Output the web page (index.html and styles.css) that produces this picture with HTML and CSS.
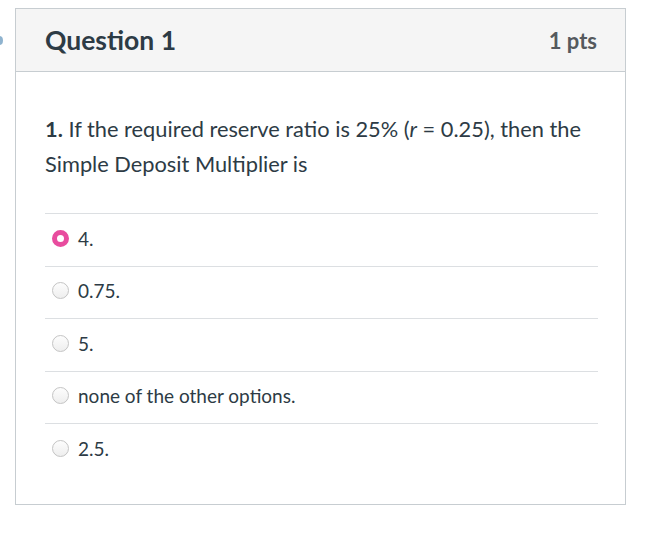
FILE: index.html
```html
<!DOCTYPE html>
<html>
<head>
<meta charset="utf-8">
<link rel="stylesheet" href="styles.css">
</head>
<body>
<div class="flag"></div>
<div class="card">
  <div class="header">
    <span class="title">Question 1</span>
    <span class="pts">1 pts</span>
  </div>
  <div class="body">
    <p class="qtext"><b>1.</b> If the required reserve ratio is 25% (<i>r</i> = 0.25), then the Simple Deposit Multiplier is</p>
    <div class="answers">
      <div class="answer"><span class="radio selected"></span><span>4.</span></div>
      <div class="answer"><span class="radio"></span><span>0.75.</span></div>
      <div class="answer"><span class="radio"></span><span>5.</span></div>
      <div class="answer"><span class="radio"></span><span>none of the other options.</span></div>
      <div class="answer"><span class="radio"></span><span>2.5.</span></div>
    </div>
  </div>
</div>
</body>
</html>
```
FILE: styles.css
```css
html, body {
  margin: 0;
  padding: 0;
  background: #fff;
  font-family: Lato, "Liberation Sans", sans-serif;
  color: #2d3b45;
}
body {
  position: relative;
  padding-top: 8px;
}
.flag {
  position: absolute;
  left: -4px;
  top: 36px;
  width: 7px;
  height: 9px;
  border-radius: 50%;
  background: #8fb3cf;
}
.card {
  margin-left: 15px;
  width: 609px;
  border: 1px solid #c7cdd1;
}
.header {
  height: 62px;
  background: #f5f5f5;
  border-bottom: 1px solid #c7cdd1;
  display: flex;
  align-items: center;
  justify-content: space-between;
  padding: 0 28px 0 29px;
}
.title {
  font-size: 26.5px;
  font-weight: 700;
  color: #2d3b45;
}
.pts {
  font-size: 22px;
  font-weight: 700;
  color: #555a5e;
}
.body {
  padding: 39px 27px 28px 29px;
}
.qtext {
  margin: 0 0 32px;
  font-size: 21.8px;
  line-height: 35px;
}
.qtext b { font-weight: 700; }
.answer {
  box-sizing: border-box;
  display: flex;
  align-items: center;
  height: 52.5px;
  padding-bottom: 3px;
  border-top: 1px solid #dcdfe2;
  font-size: 19px;
}
.radio {
  box-sizing: border-box;
  width: 17px;
  height: 17px;
  border-radius: 50%;
  border: 1px solid #c4c4c4;
  background: linear-gradient(#fdfdfd, #eeeeee);
  margin: 0 9px 0 7px;
  flex: none;
}
.radio.selected {
  border: 5px solid #e84c9e;
  background: #fff;
}
```
